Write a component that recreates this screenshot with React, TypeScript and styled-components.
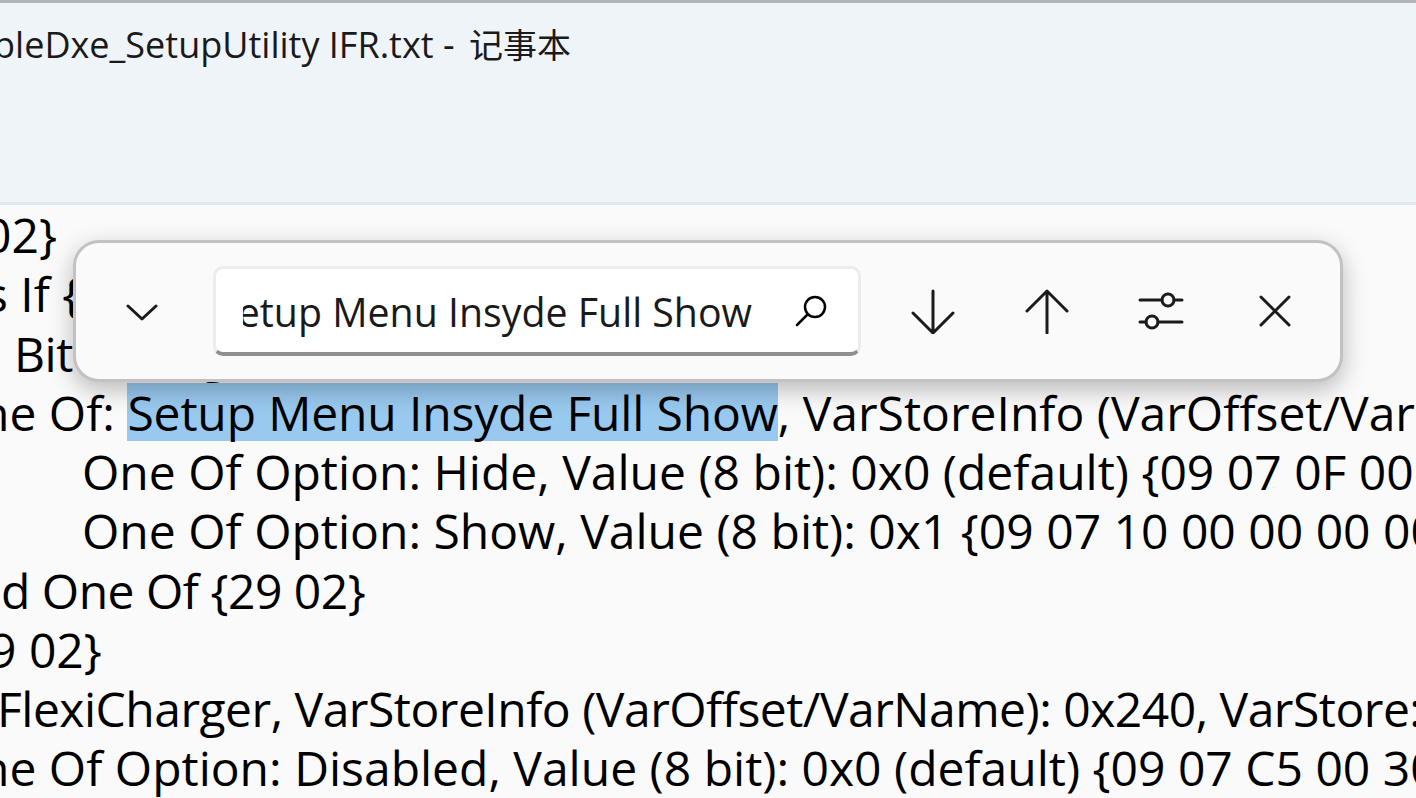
import React from "react";
import styled, { createGlobalStyle } from "styled-components";

const FONT = `"Open Sans", "Noto Sans", "Noto Sans CJK SC", sans-serif`;

const Global = createGlobalStyle`
  html, body { margin: 0; padding: 0; background: #fafafa; }
  #root { width: 1416px; height: 798px; overflow: hidden; }
`;

const Page = styled.div`
  position: relative;
  width: 1416px;
  height: 798px;
  overflow: hidden;
  display: flex;
  flex-direction: column;
  background: #fafafa;
  font-family: ${FONT};
  color: #000;
`;

const TitleBar = styled.header`
  height: 199px;
  flex: none;
  border-top: 3px solid #b4b4b4;
  border-bottom: 3px solid #e2e8ec;
  background: #eff4f9;
  overflow: hidden;
`;

const Title = styled.div`
  margin: 19px 0 0 -80px;
  font-size: 36px;
  line-height: 46px;
  white-space: pre;
  color: #1a1a1a;
`;

const TitleApp = styled.span`
  margin-left: 5px;
  font-size: 34px;
`;

const Editor = styled.main`
  flex: 1;
  overflow: hidden;
`;

const Line = styled.div<{ $indent: number; $tracking?: number }>`
  height: 59.25px;
  line-height: 59.25px;
  margin-left: ${(p) => p.$indent}px;
  font-size: 48px;
  letter-spacing: ${(p) => p.$tracking ?? 0}px;
  white-space: pre;
`;

const Match = styled.span`
  display: inline-block;
  height: 58px;
  line-height: 60px;
  letter-spacing: -0.15px;
  background: #99c9ef;
  vertical-align: top;
`;

const FindPanel = styled.section`
  position: absolute;
  left: 73px;
  top: 240px;
  width: 1270px;
  height: 142px;
  box-sizing: border-box;
  display: flex;
  align-items: center;
  padding: 0 0 0 24px;
  background: #fafafa;
  border: 3px solid #c2c2c2;
  border-radius: 26px;
  box-shadow: 0 8px 24px rgba(0, 0, 0, 0.26);
`;

const IconButton = styled.button<{ $width: number }>`
  flex: none;
  width: ${(p) => p.$width}px;
  height: 60px;
  padding: 0;
  border: 0;
  background: none;
  display: flex;
  align-items: center;
  justify-content: center;
  color: #1b1b1b;
`;

const SearchBox = styled.div`
  flex: none;
  width: 648px;
  height: 90px;
  margin: 0 15px 0 30px;
  box-sizing: border-box;
  display: flex;
  align-items: center;
  padding: 0 31px 0 27px;
  background: #fff;
  border: 3px solid #ececec;
  border-bottom: 4px solid #8f8f8f;
  border-radius: 10px;
`;

const SearchText = styled.div`
  flex: 1;
  min-width: 0;
  overflow: hidden;
  display: flex;
  justify-content: flex-end;
  padding-top: 3px;
  font-size: 39.3px;
  line-height: 54px;
  color: #1a1a1a;
  white-space: pre;
  margin-right: 43px;
`;

const Icon = styled.svg`
  display: block;
  fill: none;
  stroke: currentColor;
  stroke-width: 3;
  stroke-linecap: round;
  stroke-linejoin: round;
`;

const ChevronIcon = styled(Icon)`
  margin-top: 3px;
`;

const SearchIcon = styled(Icon)`
  stroke-width: 2.5;
`;

const lines: { indent: number; tracking?: number; text: React.ReactNode }[] = [
  { indent: -16, text: "02}" },
  { indent: -15, text: "s If {0A 82}" },
  { indent: 14, tracking: -0.5, text: "Bit Storage" },
  {
    indent: -20,
    text: (
      <>
        ne Of: <Match>Setup Menu Insyde Full Show</Match>, VarStoreInfo (VarOffset/VarName)
      </>
    ),
  },
  { indent: 82, text: "One Of Option: Hide, Value (8 bit): 0x0 (default) {09 07 0F 00 00 00 00}" },
  { indent: 82, text: "One Of Option: Show, Value (8 bit): 0x1 {09 07 10 00 00 00 00}" },
  { indent: 1, tracking: -0.5, text: "d One Of {29 02}" },
  { indent: -11, text: "9 02}" },
  { indent: -3, tracking: -0.5, text: "FlexiCharger, VarStoreInfo (VarOffset/VarName): 0x240, VarStore: 0x1" },
  { indent: -20, text: "ne Of Option: Disabled, Value (8 bit): 0x0 (default) {09 07 C5 00 30 00}" },
];

export default function App() {
  return (
    <Page>
      <Global />
      <TitleBar>
        <Title>
          SampleDxe_SetupUtility IFR.txt - <TitleApp>记事本</TitleApp>
        </Title>
      </TitleBar>
      <Editor>
        {lines.map((l, i) => (
          <Line key={i} $indent={l.indent} $tracking={l.tracking}>
            {l.text}
          </Line>
        ))}
      </Editor>
      <FindPanel>
        <IconButton $width={83} aria-label="展开">
          <ChevronIcon width="32" height="17" viewBox="0 0 32 17">
            <path d="M2 2 L16 15 L30 2" />
          </ChevronIcon>
        </IconButton>
        <SearchBox>
          <SearchText>
            <span>Setup Menu Insyde Full Show</span>
          </SearchText>
          <SearchIcon width="32" height="32" viewBox="0 0 32 32">
            <circle cx="20" cy="12" r="10" />
            <path d="M12.5 19.5 L2 30" />
          </SearchIcon>
        </SearchBox>
        <IconButton $width={114} aria-label="下一个">
          <Icon width="44" height="46" viewBox="0 0 44 46">
            <path d="M22 3 V45 M2 25 L22 45 L42 25" />
          </Icon>
        </IconButton>
        <IconButton $width={114} aria-label="上一个">
          <Icon width="44" height="46" viewBox="0 0 44 46">
            <path d="M22 45 V3 M2 23 L22 3 L42 23" />
          </Icon>
        </IconButton>
        <IconButton $width={114} aria-label="选项">
          <Icon width="46" height="40" viewBox="0 0 46 40">
            <path d="M2 9 H24 M36 9 H44 M2 31 H8 M20 31 H44" />
            <circle cx="30" cy="9" r="6" />
            <circle cx="14" cy="31" r="6" />
          </Icon>
        </IconButton>
        <IconButton $width={114} aria-label="关闭">
          <Icon width="32" height="32" viewBox="0 0 32 32">
            <path d="M2 2 L30 30 M30 2 L2 30" />
          </Icon>
        </IconButton>
      </FindPanel>
    </Page>
  );
}
